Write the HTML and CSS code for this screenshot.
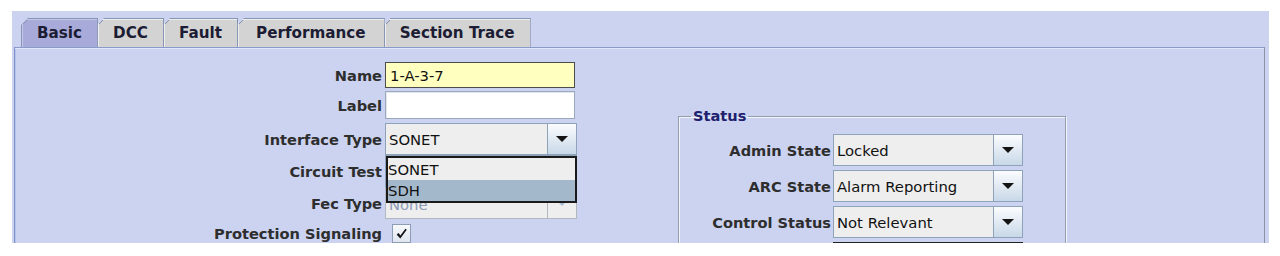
FILE: index.html
```html
<!DOCTYPE html>
<html>
<head>
<meta charset="utf-8">
<link rel="stylesheet" href="styles.css">
</head>
<body>
<div class="window">
  <div class="tabs">
    <div class="tab selected">Basic</div>
    <div class="tab">DCC</div>
    <div class="tab">Fault</div>
    <div class="tab long">Performance</div>
    <div class="tab">Section Trace</div>
  </div>
  <div class="panel">
    <div class="form">
      <div class="row r-name">
        <span class="lbl">Name</span>
        <div class="text req">1-A-3-7</div>
      </div>
      <div class="row r-label">
        <span class="lbl">Label</span>
        <div class="text"></div>
      </div>
      <div class="row r-combo first">
        <span class="lbl">Interface Type</span>
        <div class="combo wide">
          <div class="val">SONET</div>
          <div class="btn"><span class="arrow"></span></div>
          <div class="menu">
            <div class="item">SONET</div>
            <div class="item sel">SDH</div>
          </div>
        </div>
      </div>
      <div class="row r-combo">
        <span class="lbl">Circuit Test</span>
        <div class="combo wide">
          <div class="val"></div>
          <div class="btn"><span class="arrow"></span></div>
        </div>
      </div>
      <div class="row r-combo">
        <span class="lbl">Fec Type</span>
        <div class="combo wide disabled">
          <div class="val">None</div>
          <div class="btn"><span class="arrow"></span></div>
        </div>
      </div>
      <div class="row r-check">
        <span class="lbl">Protection Signaling</span>
        <div class="check">
          <svg width="17" height="17" viewBox="0 0 17 17"><path d="M3.6 9.4 L5.6 8 L7.4 10.6 L12.4 3.8 L13.8 4.8 L7.3 13.6 Z" fill="#141414"/></svg>
        </div>
      </div>
    </div>
    <fieldset class="status">
      <legend>Status</legend>
      <div class="row s-row">
        <span class="lbl">Admin State</span>
        <div class="combo">
          <div class="val">Locked</div>
          <div class="btn"><span class="arrow"></span></div>
        </div>
      </div>
      <div class="row s-row">
        <span class="lbl">ARC State</span>
        <div class="combo">
          <div class="val">Alarm Reporting</div>
          <div class="btn"><span class="arrow"></span></div>
        </div>
      </div>
      <div class="row s-row">
        <span class="lbl">Control Status</span>
        <div class="combo">
          <div class="val">Not Relevant</div>
          <div class="btn"><span class="arrow"></span></div>
        </div>
      </div>
      <div class="row s-row">
        <span class="lbl"></span>
        <div class="combo dark">
          <div class="val"></div>
          <div class="btn"><span class="arrow"></span></div>
        </div>
      </div>
    </fieldset>
  </div>
</div>
</body>
</html>
```

FILE: styles.css
```css
body {
  margin: 0;
  background: #ffffff;
  font-family: "DejaVu Sans", "Liberation Sans", sans-serif;
}

.window {
  margin: 11px 11px 0 12px;
  height: 232px;
  background: #cbd3f1;
  overflow: hidden;
  display: flex;
  flex-direction: column;
}

.tabs {
  display: flex;
  padding: 7px 0 0 9px;
  flex: none;
}

.tab {
  height: 29px;
  box-sizing: border-box;
  padding: 0 15px;
  border: 1px solid #8796b4;
  border-bottom: none;
  background:
    linear-gradient(to bottom right, transparent calc(50% - 0.8px), #8796b4 50%, transparent calc(50% + 0.8px)) 0 0 / 8px 8px no-repeat border-box,
    #d3d3d3;
  box-shadow: inset 1px 1px 0 #eeeeee;
  clip-path: polygon(7px 0, 100% 0, 100% 100%, 0 100%, 0 7px);
  font-weight: bold;
  font-size: 15.2px;
  line-height: 28px;
  color: #1c1c34;
  white-space: nowrap;
}

.tab + .tab {
  margin-left: -1px;
}

.tab.long {
  padding: 0 18px;
}

.tab.selected {
  background:
    linear-gradient(to bottom right, transparent calc(50% - 0.8px), #8796b4 50%, transparent calc(50% + 0.8px)) 0 0 / 8px 8px no-repeat border-box,
    #a8aad9;
  box-shadow: inset 1px 1px 0 #c4c6ea;
}

.panel {
  flex: 1;
  margin: 0 4px 0 2px;
  border-top: 1px solid #8b9bc9;
  border-left: 1px solid #7b92cb;
  border-right: 1px solid #8a92a6;
  box-shadow: inset 0 1px 0 #e0e7fa, inset 1px 0 0 #b6c4ec;
  display: flex;
  align-items: flex-start;
  padding-top: 14px;
}

.form {
  display: flex;
  flex-direction: column;
  flex: none;
}

.row {
  display: flex;
  align-items: center;
}

.lbl {
  width: 367px;
  margin-right: 3px;
  text-align: right;
  font-weight: bold;
  font-size: 14.6px;
  color: #2e2e2e;
  white-space: nowrap;
}

.r-name { height: 26px; }
.r-label { height: 28px; margin-top: 3px; }
.r-combo { height: 32px; }
.r-combo.first { margin-top: 4px; }
.r-check { height: 24px; margin-top: 2px; }

.text {
  width: 190px;
  height: 100%;
  box-sizing: border-box;
  border: 1px solid #9aa9bb;
  box-shadow: inset 1px 1px 0 #e4e8ee;
  background: #ffffff;
  padding: 0 4px;
  font-size: 14.8px;
  color: #111111;
  display: flex;
  align-items: center;
}

.text.req {
  background: #ffffbf;
  border-color: #4c4c4c;
  box-shadow: none;
}

.combo {
  position: relative;
  width: 190px;
  height: 32px;
  box-sizing: border-box;
  border: 1px solid #8ea3b9;
  background: #eeeeee;
  display: flex;
}

.combo.wide {
  width: 192px;
}

.combo .val {
  flex: 1;
  padding-left: 3px;
  font-size: 14.8px;
  color: #111111;
  display: flex;
  align-items: center;
  white-space: nowrap;
  overflow: hidden;
}

.combo .btn {
  width: 28px;
  border-left: 1px solid #8ea3b9;
  background: linear-gradient(#fbfcfe, #c8d8e8);
  display: flex;
  align-items: center;
  justify-content: center;
}

.arrow {
  width: 0;
  height: 0;
  border-left: 6px solid transparent;
  border-right: 6px solid transparent;
  border-top: 6px solid #141414;
}

.combo.disabled {
  border-color: #b3b7bf;
}

.combo.disabled .val {
  color: #8e9ab6;
  padding-top: 2px;
}

.combo.disabled .btn {
  border-left-color: #b3b7bf;
  background: #eeeeee;
}

.combo.disabled .arrow {
  border-top-color: #a9bcd6;
}

.combo.dark {
  border-color: #222222;
}

.menu {
  position: absolute;
  left: 0;
  top: 32px;
  width: 191px;
  box-sizing: border-box;
  border: 2px solid #1a1a1a;
  z-index: 5;
}

.item {
  height: 22px;
  background: #eeeeee;
  font-size: 14.8px;
  color: #111111;
  display: flex;
  align-items: center;
}

.item.sel {
  height: 21px;
  background: #a4b8cc;
}

.check {
  width: 19px;
  height: 19px;
  box-sizing: border-box;
  margin-left: 7px;
  border: 1px solid #8c9db5;
  background: linear-gradient(#f7f9fc, #dfe6ef);
  display: flex;
  align-items: center;
  justify-content: center;
}

.status {
  margin: 45px 0 0 101px;
  padding: 9px 0 0 0;
  width: 388px;
  height: 220px;
  box-sizing: border-box;
  border: 1px solid #959cab;
  box-shadow: inset 1px 1px 0 #f1f4fb, 1px 1px 0 #f1f4fb;
  min-inline-size: 0;
  flex: none;
}

.status legend {
  margin-left: 12px;
  padding: 0 2px;
  font-weight: bold;
  font-size: 14.6px;
  line-height: 18px;
  color: #20206e;
}

.status .lbl {
  width: 152px;
  margin-right: 2px;
}

.s-row {
  height: 32px;
  margin-bottom: 4px;
}
```
